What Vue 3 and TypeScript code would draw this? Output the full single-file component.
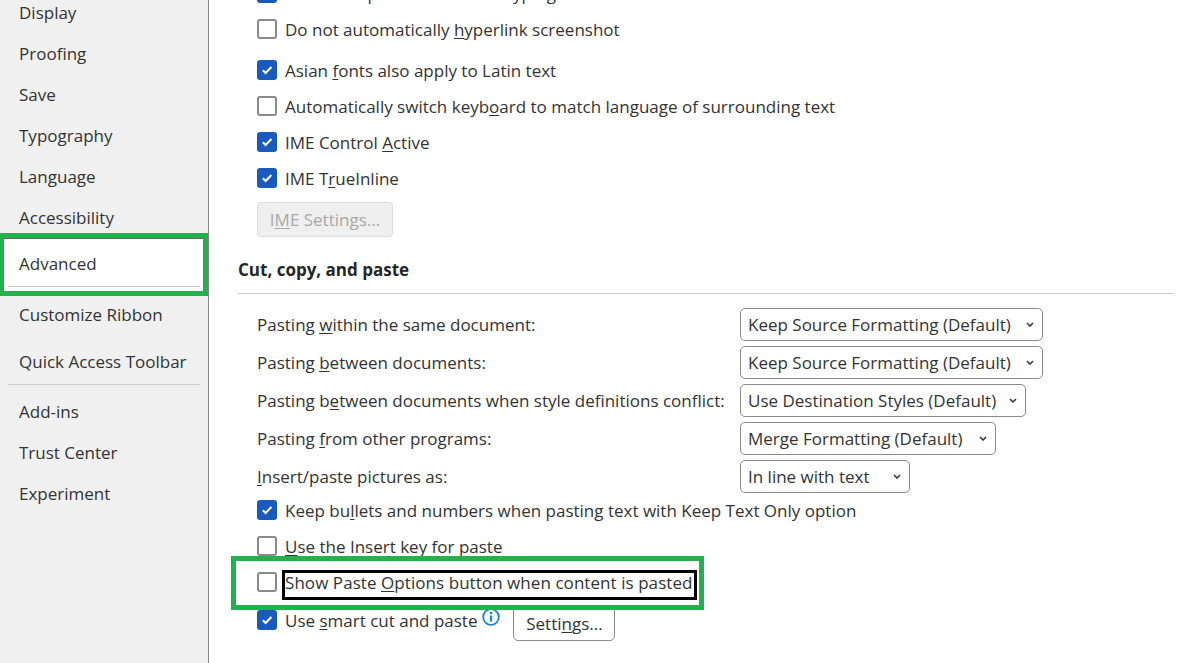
<script setup lang="ts">
const upper = [
  { checked: false, pre: 'Do not automatically ', key: 'h', post: 'yperlink screenshot', gap: false },
  { checked: true, pre: 'Asian ', key: 'f', post: 'onts also apply to Latin text', gap: true },
  { checked: false, pre: 'Automatically switch keyb', key: 'o', post: 'ard to match language of surrounding text', gap: false },
  { checked: true, pre: 'IME Control ', key: 'A', post: 'ctive', gap: false },
  { checked: true, pre: 'IME T', key: 'r', post: 'ueInline', gap: false },
]
const pasteRows = [
  { pre: 'Pasting ', key: 'w', post: 'ithin the same document:', value: 'Keep Source Formatting (Default)', width: 303 },
  { pre: 'Pasting ', key: 'b', post: 'etween documents:', value: 'Keep Source Formatting (Default)', width: 303 },
  { pre: 'Pasting b', key: 'e', post: 'tween documents when style definitions conflict:', value: 'Use Destination Styles (Default)', width: 286 },
  { pre: 'Pasting ', key: 'f', post: 'rom other programs:', value: 'Merge Formatting (Default)', width: 256 },
  { pre: '', key: 'I', post: 'nsert/paste pictures as:', value: 'In line with text', width: 170 },
]
const navTop = ['Display', 'Proofing', 'Save', 'Typography', 'Language', 'Accessibility']
const navBottom = ['Add-ins', 'Trust Center', 'Experiment']
</script>

<template>
  <div class="page">
    <aside class="side">
      <div v-for="n in navTop" :key="n" class="nav">{{ n }}</div>
      <div class="nav active"><span>Advanced</span></div>
      <div class="nav custom">Customize Ribbon</div>
      <div class="nav quick">Quick Access Toolbar</div>
      <div class="nav-sep"></div>
      <div v-for="n in navBottom" :key="n" class="nav">{{ n }}</div>
    </aside>
    <main class="main">
      <div class="row">
        <span class="box on"><svg viewBox="0 0 20 20"><path d="M5.8 10.3l2.8 2.7 5.8-6" /></svg></span>
        <span>Show text predictions while typing</span>
      </div>
      <div v-for="r in upper" :key="r.pre" class="row" :class="{ gapped: r.gap }">
        <span class="box" :class="{ on: r.checked }"><svg v-if="r.checked" viewBox="0 0 20 20"><path d="M5.8 10.3l2.8 2.7 5.8-6" /></svg></span>
        <span>{{ r.pre }}<u>{{ r.key }}</u>{{ r.post }}</span>
      </div>
      <div class="ime-btn">I<u>M</u>E Settings...</div>
      <h2 class="heading">Cut, copy, and paste</h2>
      <div class="rule"></div>
      <div class="paste-grid">
        <div v-for="p in pasteRows" :key="p.pre + p.key" class="paste-row">
          <span class="paste-label">{{ p.pre }}<u>{{ p.key }}</u>{{ p.post }}</span>
          <div class="select" :style="{ width: p.width + 'px' }">
            <span>{{ p.value }}</span>
            <svg class="chev" viewBox="0 0 8 5"><path d="M1 1l3 3 3-3" /></svg>
          </div>
        </div>
      </div>
      <div class="row r-keep">
        <span class="box on"><svg viewBox="0 0 20 20"><path d="M5.8 10.3l2.8 2.7 5.8-6" /></svg></span>
        <span>Keep bu<u>l</u>lets and numbers when pasting text with Keep Text Only option</span>
      </div>
      <div class="row">
        <span class="box"></span>
        <span><u>U</u>se the Insert key for paste</span>
      </div>
      <div class="row">
        <span class="box"></span>
        <span class="focus">Show Paste <u>O</u>ptions button when content is pasted</span>
      </div>
      <div class="row smart">
        <span class="box on"><svg viewBox="0 0 20 20"><path d="M5.8 10.3l2.8 2.7 5.8-6" /></svg></span>
        <span>Use <u>s</u>mart cut and paste</span>
        <svg class="info" viewBox="0 0 18 18"><circle cx="9" cy="9" r="7.8" /><rect x="7.8" y="7.6" width="2.4" height="6" /><rect x="7.8" y="4" width="2.4" height="2.2" /></svg>
        <div class="settings">Setti<u>n</u>gs...</div>
      </div>
    </main>
    <div class="mark mark-nav"></div>
    <div class="mark mark-row"></div>
  </div>
</template>

<style>
html, body { margin: 0; background: #fff; overflow: hidden; }
</style>

<style scoped>
.page {
  position: relative;
  display: flex;
  width: 1198px;
  height: 663px;
  overflow: hidden;
  background: #fff;
  font-family: "Open Sans", "Noto Sans", sans-serif;
  font-size: 17px;
  color: #333;
}
u { text-underline-offset: 2px; text-decoration-thickness: 1px; }
.side {
  width: 208px;
  flex: none;
  background: #f0f0f0;
  border-right: 1px solid #8a8a8a;
}
.nav {
  height: 41px;
  line-height: 41px;
  padding-left: 19px;
  position: relative;
  top: -8px;
}
.nav.active {
  height: 53px;
  box-sizing: border-box;
  line-height: 50px;
  background: #fff;
  border-top: 1px solid #666;
}
.nav.active::after {
  content: "";
  position: absolute;
  left: 8px;
  right: 8px;
  bottom: 4px;
  height: 1px;
  background: #ccc;
}
.nav.custom { height: 50px; line-height: 48px; }
.nav.quick { height: 43px; line-height: 42px; }
.nav-sep { height: 1px; margin: 0 8px 6px; background: #ccc; position: relative; top: -8px; }
.main {
  flex: 1;
  padding-left: 48px;
  padding-right: 24px;
  position: relative;
  top: -25px;
}
.row {
  height: 36px;
  display: flex;
  align-items: center;
  gap: 8px;
  white-space: nowrap;
}
.gapped { margin-top: 5px; }
.box {
  width: 20px;
  height: 20px;
  box-sizing: border-box;
  border: 2px solid #8a8a8a;
  border-radius: 3px;
  flex: none;
  background: #fff;
  display: block;
}
.box.on { background: #185abd; border: none; }
.box svg { display: block; width: 20px; height: 20px; fill: none; stroke: #fff; stroke-width: 2; }
.ime-btn {
  width: 136px;
  height: 35px;
  box-sizing: border-box;
  margin-top: 6px;
  border: 1px solid #ddd;
  border-radius: 4px;
  background: #efefef;
  color: #a8a8a8;
  text-align: center;
  line-height: 33px;
}
.heading {
  margin: 20px 0 0 -19px;
  font-size: 17px;
  font-weight: 700;
  line-height: 26px;
  color: #262626;
}
.rule { height: 1px; background: #ccc; margin: 10px 0 12px -19px; }
.paste-row {
  display: flex;
  align-items: flex-start;
  height: 38px;
  line-height: 38px;
  white-space: nowrap;
}
.paste-label { width: 483px; flex: none; }
.select {
  height: 33px;
  margin-top: 2px;
  line-height: 31px;
  box-sizing: border-box;
  border: 1px solid #8a8a8a;
  border-radius: 5px;
  padding: 0 8px 0 7px;
  display: flex;
  align-items: center;
  justify-content: space-between;
}
.chev { width: 8px; height: 5px; fill: none; stroke: #333; stroke-width: 1.5; }
.r-keep { margin-top: -4px; }
.focus {
  outline: 3px solid #000;
  display: block;
  box-sizing: border-box;
  width: 409px;
  height: 24px;
  line-height: 20px;
  margin-top: 6px;
  letter-spacing: 0.06px;
}
.smart { height: 40px; }
.info { width: 18px; height: 18px; margin: -6px 0 0 -3px; fill: #1a86d0; flex: none; }
.info circle { fill: none; stroke: #1a86d0; stroke-width: 1.8; }
.settings {
  width: 102px;
  height: 35px;
  line-height: 33px;
  box-sizing: border-box;
  border: 1px solid #8a8a8a;
  border-radius: 5px;
  text-align: center;
  margin: 7px 0 0 5px;
}
.mark { position: absolute; border: 5px solid #22b14c; box-sizing: border-box; }
.mark-nav { left: 0; top: 233px; width: 208px; height: 63px; border-left-width: 4px; }
.mark-row { left: 231px; top: 556px; width: 473px; height: 54px; }
</style>
